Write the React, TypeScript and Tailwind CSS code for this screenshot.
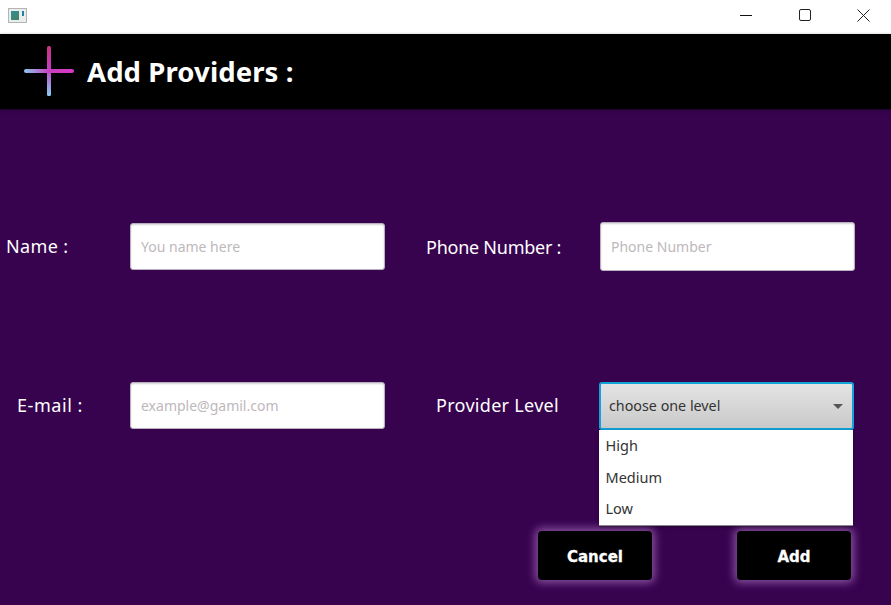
export default function App() {
  const inputCls =
    "w-full h-full rounded-[3px] bg-white border border-[#b9b0bf] shadow-[inset_0_1px_2px_rgba(0,0,0,0.18)] pl-[10px] pb-[1px] text-[14px] text-[#333] outline-none placeholder:text-[#bdb8bb]";
  const btnCls =
    "w-[114px] h-[49px] pt-[3px] rounded-[4px] bg-black text-white text-[15px] font-['DejaVu_Sans',sans-serif] font-bold [-webkit-text-stroke:0.3px_white] shadow-[0_0_9px_3px_rgba(190,130,210,0.6)]";
  return (
    <div className="w-[891px] h-[605px] flex flex-col overflow-hidden bg-[#37034f] font-['Noto_Sans',sans-serif]">
      <div className="h-[34px] bg-white flex items-center justify-between shrink-0">
        <div className="ml-[8px] mt-[-3px] w-[19px] h-[15px] border border-[#b4b4b4] bg-[#e8eeee] flex items-stretch p-[2px] gap-[2px]">
          <div className="w-[8px] bg-gradient-to-br from-[#2f8f9a] to-[#4a7f5e]" />
          <div className="flex-1 flex flex-col items-end">
            <div className="w-[2px] h-[5px] bg-[#2a7f9a]" />
          </div>
        </div>
        <div className="flex items-center mr-[-2px] mt-[-4px]">
          <div className="w-[59px] h-[30px] flex items-center justify-center">
            <svg width="12" height="12" viewBox="0 0 12 12"><path d="M0 6.5h12" stroke="#111" strokeWidth="1" /></svg>
          </div>
          <div className="w-[59px] h-[30px] flex items-center justify-center">
            <svg width="12" height="12" viewBox="0 0 12 12"><rect x="0.5" y="0.5" width="11" height="11" rx="1.5" fill="none" stroke="#222" strokeWidth="1" /></svg>
          </div>
          <div className="w-[59px] h-[30px] flex items-center justify-center">
            <svg width="13" height="13" viewBox="0 0 13 13"><path d="M0.5 0.5l12 12M12.5 0.5l-12 12" stroke="#222" strokeWidth="1" /></svg>
          </div>
        </div>
      </div>

      <header className="h-[75px] bg-black flex items-center shrink-0 shadow-[0_1px_3px_rgba(0,0,0,0.5)]">
        <svg className="ml-[24px] shrink-0 mt-[-2px]" width="50" height="50" viewBox="0 0 50 50">
          <defs>
            <linearGradient id="h" x1="0" y1="0" x2="1" y2="0">
              <stop offset="0" stopColor="#8cc8ee" />
              <stop offset="0.5" stopColor="#c840c0" />
              <stop offset="1" stopColor="#d836c4" />
            </linearGradient>
            <linearGradient id="v" x1="0" y1="0" x2="0" y2="1">
              <stop offset="0" stopColor="#c8347c" />
              <stop offset="0.45" stopColor="#c83cc4" />
              <stop offset="1" stopColor="#84d0f4" />
            </linearGradient>
          </defs>
          <rect x="23" y="0" width="4" height="50" rx="1.5" fill="url(#v)" />
          <rect x="0" y="23" width="50" height="4" rx="2" fill="url(#h)" />
        </svg>
        <h1 className="ml-[13px] text-[27.5px] leading-none font-bold text-white tracking-[0.1px]">Add Providers :</h1>
      </header>

      <main className="flex-1 flex flex-col pt-[113px]">
        <div className="grid grid-cols-[130px_255px_215px_255px] h-[49px] items-center">
          <label className="pl-[6px] text-[18px] tracking-[0.35px] text-white">Name :</label>
          <div className="h-[47px]"><input className={inputCls} placeholder="You name here" /></div>
          <label className="pl-[41px] pt-[2px] text-[18px] tracking-[-0.25px] text-white">Phone Number :</label>
          <div className="h-[49px]"><input className={inputCls} placeholder="Phone Number" /></div>
        </div>

        <div className="mt-[111px] grid grid-cols-[130px_255px_214px_255px] h-[48px] items-center">
          <label className="pl-[17px] pb-[2px] text-[18px] tracking-[0.55px] text-white">E-mail :</label>
          <div className="h-[47px] self-start"><input className={inputCls} placeholder="example@gamil.com" /></div>
          <label className="pl-[51px] pb-[2px] text-[18px] tracking-[0.3px] text-white">Provider Level</label>
          <div className="relative h-[48px]">
            <div className="h-full rounded-[3px] border-[2px] border-[#12a3d8] bg-gradient-to-b from-[#e4e4e4] to-[#c9c9c9] flex items-center justify-between pl-[8px] pr-[9px]">
              <span className="text-[14.3px] text-[#333]">choose one level</span>
              <svg width="10" height="5" viewBox="0 0 10 5"><path d="M0 0h10L5 5z" fill="#555" /></svg>
            </div>
            <ul className="absolute left-0 top-[48px] w-[254px] h-[96px] z-10 bg-white flex flex-col border-b border-[#8a8590] shadow-[0_1px_3px_rgba(0,0,0,0.4)] pl-[6.5px] text-[14.5px] text-[#333]">
              <li className="flex-1 flex items-center">High</li>
              <li className="flex-1 flex items-center">Medium</li>
              <li className="flex-1 flex items-center">Low</li>
            </ul>
          </div>
        </div>

        <div className="mt-[101px] ml-[538px] flex gap-[85px]">
          <button className={btnCls}>Cancel</button>
          <button className={btnCls}>Add</button>
        </div>
      </main>
    </div>
  );
}
